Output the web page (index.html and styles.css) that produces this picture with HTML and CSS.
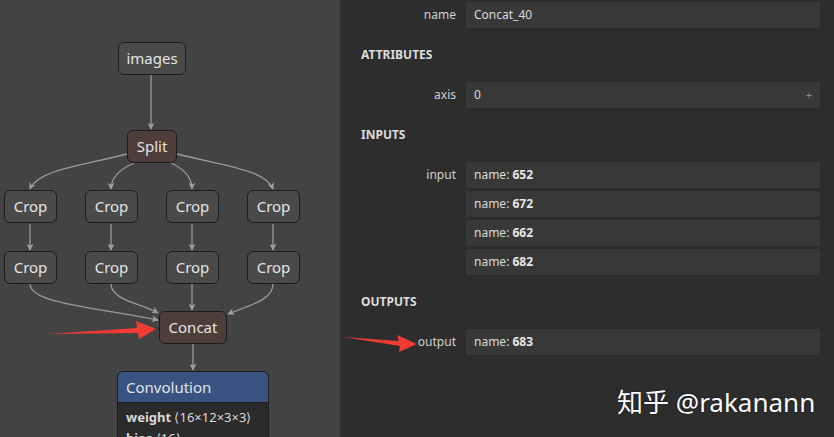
FILE: index.html
```html
<!DOCTYPE html>
<html lang="en">
<head>
    <meta charset="UTF-8">
    <title>Netron - Concat_40</title>
    <link rel="stylesheet" href="styles.css">
</head>
<body>
    <div class="app">
        <div class="graph">
            <svg class="edges" width="340" height="437" viewBox="0 0 340 437">
                <defs>
                    <marker id="arrow" viewBox="0 0 10 10" refX="9" refY="5" markerWidth="7" markerHeight="7" orient="auto" markerUnits="userSpaceOnUse">
                        <path d="M0,0 L10,5 L0,10 L3,5 z" fill="#a0a0a0"/>
                    </marker>
                </defs>
                <g fill="none" stroke="#9a9a9a" stroke-width="1.3" marker-end="url(#arrow)">
                    <path d="M151,75 L151,129"/>
                    <path d="M127,154 C80,166 38,170 30,189"/>
                    <path d="M134,163 C118,170 111,178 111,189"/>
                    <path d="M171,163 C186,170 192,178 192,189"/>
                    <path d="M177,154 C225,166 266,170 273,189"/>
                    <path d="M30,224 L30,250"/>
                    <path d="M111,224 L111,250"/>
                    <path d="M192,224 L192,250"/>
                    <path d="M273,224 L273,250"/>
                    <path d="M30,284 C30,304 100,308 158,320"/>
                    <path d="M111,284 C111,300 140,303 158,313"/>
                    <path d="M192,284 L192,310"/>
                    <path d="M273,284 C273,300 250,305 228,314"/>
                    <path d="M193,344 L193,370"/>
                </g>
            </svg>

            <div class="node plain" style="left:118px; top:42px; width:68px;">images</div>
            <div class="node tensor" style="left:127px; top:130px; width:50px;">Split</div>

            <div class="node plain" style="left:4px; top:190px;">Crop</div>
            <div class="node plain" style="left:85px; top:190px;">Crop</div>
            <div class="node plain" style="left:166px; top:190px;">Crop</div>
            <div class="node plain" style="left:247px; top:190px;">Crop</div>

            <div class="node plain" style="left:4px; top:251px;">Crop</div>
            <div class="node plain" style="left:85px; top:251px;">Crop</div>
            <div class="node plain" style="left:166px; top:251px;">Crop</div>
            <div class="node plain" style="left:247px; top:251px;">Crop</div>

            <div class="node tensor" style="left:159px; top:311px; width:68px;">Concat</div>

            <div class="layer" style="left:117px; top:371px;">
                <div class="layer-title">Convolution</div>
                <div class="layer-body">
                    <div><b>weight</b> ⟨16×12×3×3⟩</div>
                    <div><b>bias</b> ⟨16⟩</div>
                </div>
            </div>
        </div>

        <div class="sidebar">
            <div class="row first">
                <div class="label">name</div>
                <div class="value">Concat_40</div>
            </div>

            <div class="section">ATTRIBUTES</div>
            <div class="row">
                <div class="label">axis</div>
                <div class="value">0<span class="expand">+</span></div>
            </div>

            <div class="section">INPUTS</div>
            <div class="row">
                <div class="label">input</div>
                <div class="values">
                    <div class="value">name: <b>652</b></div>
                    <div class="value">name: <b>672</b></div>
                    <div class="value">name: <b>662</b></div>
                    <div class="value">name: <b>682</b></div>
                </div>
            </div>

            <div class="section">OUTPUTS</div>
            <div class="row">
                <div class="label">output</div>
                <div class="value">name: <b>683</b></div>
            </div>
        </div>
    </div>

    <svg class="marks" width="834" height="437" viewBox="0 0 834 437">
        <polygon points="48,334 137,328 136,321 156,329 139,339 138,333" fill="#f23b34"/>
        <polygon points="343,337 399,341 397,335 417,344 399,352 400,346" fill="#f23b34"/>
    </svg>

    <div class="watermark">知乎 @rakanann</div>
</body>
</html>
```

FILE: styles.css
```css
body {
    margin: 0;
    font-family: "Noto Sans", "Open Sans", sans-serif;
    background-color: #2d2d2d;
    overflow: hidden;
}
.app {
    display: flex;
    width: 834px;
    height: 437px;
}
.graph {
    position: relative;
    width: 340px;
    height: 437px;
    flex-shrink: 0;
    background-color: #434343;
    overflow: hidden;
}
.edges {
    position: absolute;
    left: 0;
    top: 0;
}
.node {
    position: absolute;
    box-sizing: border-box;
    width: 53px;
    height: 33px;
    line-height: 30px;
    text-align: center;
    font-size: 15px;
    color: #e4e4e4;
    border: 1px solid #1c1c1c;
    border-radius: 6px;
}
.plain {
    background-color: #4a4a4a;
}
.tensor {
    background-color: #4e3d39;
}
.layer {
    position: absolute;
    box-sizing: border-box;
    width: 152px;
    height: 90px;
    border: 1px solid #1c1c1c;
    border-radius: 6px;
    overflow: hidden;
    background-color: #2b2b2b;
}
.layer-title {
    height: 30px;
    line-height: 30px;
    padding-left: 8px;
    font-size: 15px;
    color: #e4e4e4;
    background-color: #385381;
    border-bottom: 1px solid #1c1c1c;
}
.layer-body {
    padding: 4px 8px;
    font-size: 13px;
    line-height: 21px;
    color: #d8d8d8;
}
.sidebar {
    flex: 1;
    box-sizing: border-box;
    padding: 2px 14px 0 21px;
    background-color: #2d2d2d;
    color: #d8d8d8;
    font-size: 12px;
}
.section {
    height: 20px;
    line-height: 20px;
    margin: 17px 0;
    font-weight: bold;
    color: #dcdcdc;
}
.row {
    display: grid;
    grid-template-columns: 95px 1fr;
    column-gap: 10px;
}
.label {
    text-align: right;
    line-height: 26px;
    color: #d0d0d0;
}
.values {
    display: flex;
    flex-direction: column;
    gap: 3px;
}
.value {
    position: relative;
    height: 26px;
    line-height: 26px;
    padding-left: 8px;
    background-color: #383838;
    color: #d8d8d8;
}
.value b {
    color: #e6e6e6;
}
.expand {
    position: absolute;
    right: 8px;
    top: 0;
    color: #8a8a8a;
    font-size: 11px;
}
.marks {
    position: absolute;
    left: 0;
    top: 0;
    pointer-events: none;
}
.watermark {
    position: absolute;
    left: 617px;
    top: 382px;
    font-family: "Noto Sans", "Noto Sans CJK SC", sans-serif;
    font-size: 26px;
    color: #ffffff;
    text-shadow: 0 0 2px rgba(0, 0, 0, 0.6);
    white-space: nowrap;
}
```
